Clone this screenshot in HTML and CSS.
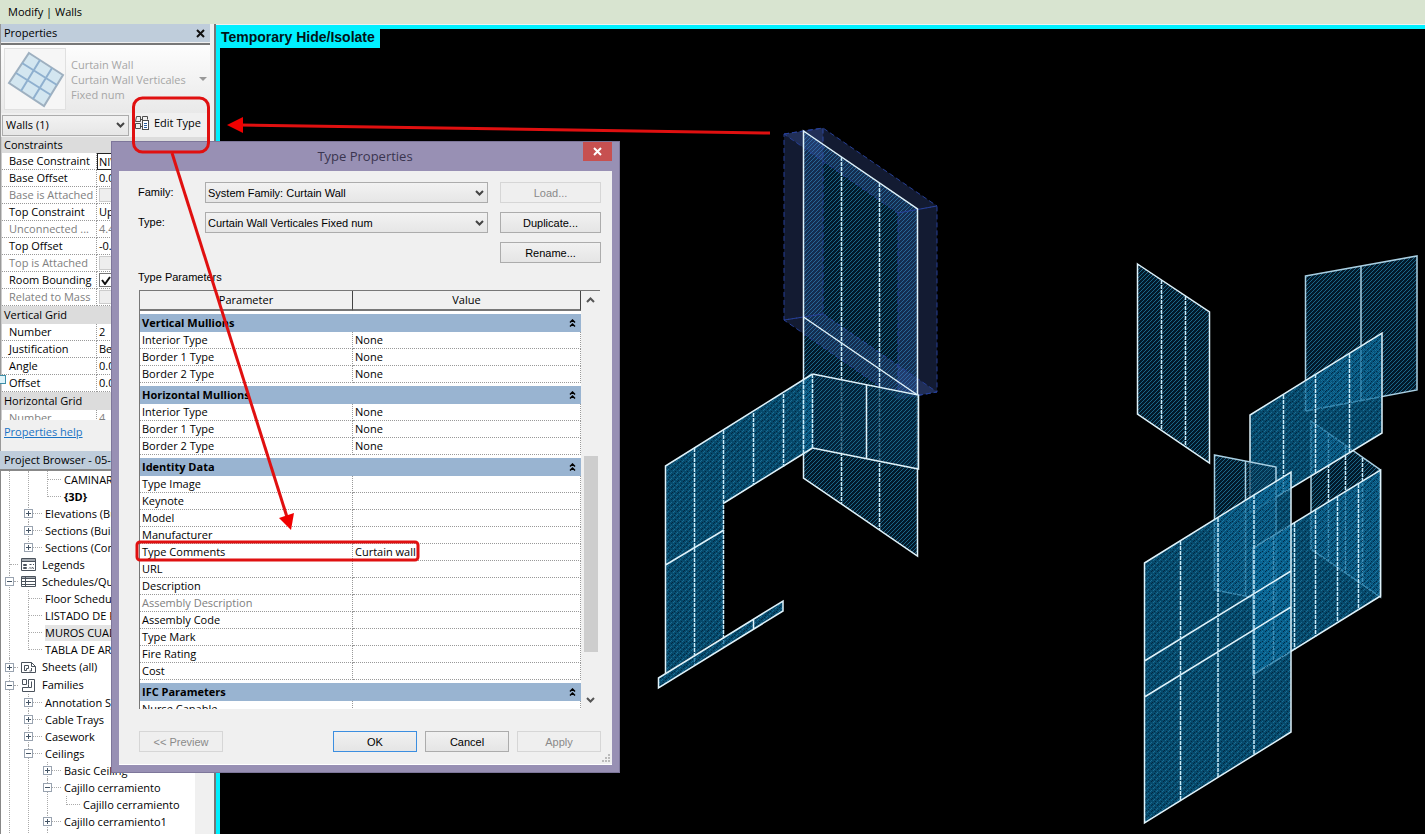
FILE: index.html
```html
<!DOCTYPE html>
<html lang="en">

<head>
  <meta charset="UTF-8">
  <meta name="viewport" content="width=device-width, initial-scale=1.0">
  <title>Type Properties</title>
  <link rel="stylesheet" href="styles.css">
</head>

<body>
  <header class="context-bar">Modify | Walls</header>

  <div class="workspace">
    <aside class="sidebar">
      <section class="properties">
        <div class="panel-title">
          <h2>Properties</h2>
          <button type="button" class="panel-close" aria-label="Close properties">
            <svg width="9" height="9" viewBox="0 0 9 9"><path d="M1 1l7 7M8 1l-7 7" /></svg>
          </button>
        </div>

        <button type="button" class="type-selector" disabled>
          <span class="thumb">
            <svg width="60" height="60" viewBox="0 0 60 60">
              <path class="glass" d="M24 4L58 26L39 57L4 34Z" />
              <path class="bars" d="M35 11L16 42M47 19L28 50M17 14L52 36M11 24L46 46" />
            </svg>
          </span>
          <span class="type-name">Curtain Wall<br>Curtain Wall Verticales<br>Fixed num</span>
          <span class="caret"></span>
        </button>

        <div class="filter-row">
          <select class="combo" aria-label="Category">
            <option>Walls (1)</option>
          </select>
          <button type="button" class="edit-type">
            <svg width="16" height="16" viewBox="0 0 16 16">
              <path d="M2.500 1.500h4v5h-5zM8.500 1.500h5v3M8.500 1.500v5M1.500 8.500h5v5h-5zM6.500 4.500h2M6.500 11.500h2" />
              <rect x="8.500" y="5.500" width="6" height="9" />
              <path class="lines" d="M10 8.500h3M10 10.500h3M10 12.500h3" />
            </svg>
            Edit Type
          </button>
        </div>

        <div class="prop-scroll">
          <table class="prop-table">
            <colgroup>
              <col class="name-col">
              <col>
            </colgroup>
            <tbody>
              <tr class="group"><th colspan="2">Constraints</th></tr>
              <tr><td>Base Constraint</td><td class="active">NIVEL 1</td></tr>
              <tr><td>Base Offset</td><td>0.0000</td></tr>
              <tr class="off"><td>Base is Attached</td><td><input type="checkbox" aria-label="Base is Attached" disabled></td></tr>
              <tr><td>Top Constraint</td><td>Up to level</td></tr>
              <tr class="off"><td>Unconnected ...</td><td>4.4000</td></tr>
              <tr><td>Top Offset</td><td>-0.1000</td></tr>
              <tr class="off"><td>Top is Attached</td><td><input type="checkbox" aria-label="Top is Attached" disabled></td></tr>
              <tr><td>Room Bounding</td><td><input type="checkbox" aria-label="Room Bounding" checked></td></tr>
              <tr class="off"><td>Related to Mass</td><td><input type="checkbox" aria-label="Related to Mass" disabled></td></tr>
              <tr class="group"><th colspan="2">Vertical Grid</th></tr>
              <tr><td>Number</td><td>2</td></tr>
              <tr><td>Justification</td><td>Beginning</td></tr>
              <tr><td>Angle</td><td>0.000°</td></tr>
              <tr><td>Offset</td><td>0.0000</td></tr>
              <tr class="group"><th colspan="2">Horizontal Grid</th></tr>
              <tr class="off"><td>Number</td><td>4</td></tr>
            </tbody>
          </table>
        </div>
        <div class="help-row"><a href="#help">Properties help</a></div>
      </section>

      <section class="browser">
        <div class="panel-title">
          <h2>Project Browser - 05-C</h2>
        </div>
        <div class="tree-box">
          <ul class="tree">
            <li>
              <ul>
                <li>
                  <ul>
                    <li><div class="node leaf"><i></i><span>CAMINAR</span></div></li>
                    <li class="last"><div class="node leaf"><i></i><b>{3D}</b></div></li>
                  </ul>
                </li>
                <li><div class="node"><button type="button" class="toggle plus" aria-label="Expand"></button><i></i><span>Elevations (Building)</span></div></li>
                <li><div class="node"><button type="button" class="toggle plus" aria-label="Expand"></button><i></i><span>Sections (Building)</span></div></li>
                <li class="last"><div class="node"><button type="button" class="toggle plus" aria-label="Expand"></button><i></i><span>Sections (Construction)</span></div></li>
              </ul>
            </li>
            <li>
              <div class="node leaf top"><i></i>
                <svg width="15" height="15" viewBox="0 0 15 15"><path class="fill" d="M1 2h13v3h-13z" /><path d="M.500 1.500h14v12h-14zM.500 4.500h14M2.500 7.500h3v1h-3zM2.500 10.500h3v1h-3zM8.500 7.500h2M12 7.500h1M8 11.500l1-1 1 1 1-1 2 1" /></svg>
                <span>Legends</span>
              </div>
            </li>
            <li>
              <div class="node top"><button type="button" class="toggle" aria-label="Collapse"></button><i></i>
                <svg width="15" height="15" viewBox="0 0 15 15"><path class="fill" d="M1 2h13v2h-13z" /><path d="M.500 2.500h14v10h-14zM.500 4.500h14M.500 7.500h14M.500 10.500h14M4.500 3v10" /></svg>
                <span>Schedules/Quantities</span>
              </div>
              <ul>
                <li><div class="node leaf"><i></i><span>Floor Schedule</span></div></li>
                <li><div class="node leaf"><i></i><span>LISTADO DE PLANOS</span></div></li>
                <li><div class="node leaf selected"><i></i><span>MUROS CUADRO</span></div></li>
                <li class="last"><div class="node leaf"><i></i><span>TABLA DE AREAS</span></div></li>
              </ul>
            </li>
            <li>
              <div class="node top tall"><button type="button" class="toggle plus" aria-label="Expand"></button><i></i>
                <svg width="15" height="15" viewBox="0 0 15 15"><path d="M.500 2.500h10l4 4v6h-14zM10.500 2.500v4h4M3.500 10.500v-5h4v3h-2v2zM10.500 8v3h-2" /></svg>
                <span>Sheets (all)</span>
              </div>
            </li>
            <li>
              <div class="node top tall"><button type="button" class="toggle" aria-label="Collapse"></button><i></i>
                <svg width="15" height="15" viewBox="0 0 15 15"><path d="M1.500 1.500h4v5h-4zM7.500 1.500h6v12h-12v-4h6v-3zM7.500 9.500h3v-6" /></svg>
                <span>Families</span>
              </div>
              <ul>
                <li><div class="node"><button type="button" class="toggle plus" aria-label="Expand"></button><i></i><span>Annotation Symbols</span></div></li>
                <li><div class="node"><button type="button" class="toggle plus" aria-label="Expand"></button><i></i><span>Cable Trays</span></div></li>
                <li><div class="node"><button type="button" class="toggle plus" aria-label="Expand"></button><i></i><span>Casework</span></div></li>
                <li>
                  <div class="node"><button type="button" class="toggle" aria-label="Collapse"></button><i></i><span>Ceilings</span></div>
                  <ul>
                    <li><div class="node"><button type="button" class="toggle plus" aria-label="Expand"></button><i></i><span>Basic Ceiling</span></div></li>
                    <li>
                      <div class="node"><button type="button" class="toggle" aria-label="Collapse"></button><i></i><span>Cajillo cerramiento</span></div>
                      <ul>
                        <li class="last"><div class="node leaf"><i></i><span>Cajillo cerramiento</span></div></li>
                      </ul>
                    </li>
                    <li><div class="node"><button type="button" class="toggle plus" aria-label="Expand"></button><i></i><span>Cajillo cerramiento1</span></div></li>
                    <li><div class="node"></div></li>
                  </ul>
                </li>
              </ul>
            </li>
          </ul>
          <div class="tree-scroll"></div>
        </div>
      </section>
    </aside>

    <main class="view">
      <div class="view-label">Temporary Hide/Isolate</div>
      <svg class="scene" viewBox="220 29 1205 805" preserveAspectRatio="xMinYMin meet">
        <defs>
          <pattern id="hatch" width="4" height="4" patternUnits="userSpaceOnUse">
            <rect width="4" height="4" fill="#032c48" fill-opacity=".6" />
            <path d="M-1 1L1 -1M0 4L4 0M3 5L5 3" stroke="#1b6688" stroke-width="1" />
          </pattern>
          <pattern id="dense" width="6" height="6" patternUnits="userSpaceOnUse">
            <rect width="6" height="6" fill="#08699a" fill-opacity=".7" />
            <path d="M0 0h1v1h-1zM3 3h1v1h-1zM5 1h1v1h-1zM2 5h1v1h-1z" fill="#001a30" fill-opacity=".7" />
            <path d="M1 2h1v1h-1zM2 1h1v1h-1zM4 5h1v1h-1zM5 4h1v1h-1z" fill="#3090ba" fill-opacity=".5" />
          </pattern>
        </defs>

        <!-- tall panel and its selection volume -->
        <path fill="url(#hatch)" d="M803.500 131L917.500 209V556L803.500 478Z" />
        <g class="volume">
          <path d="M784 134L823 128V314L784 320Z" />
          <path d="M898 213L937 206V392L898 399Z" />
          <path d="M784 134L823 128L937 206L898 213Z" />
          <path d="M784 320L823 314L937 392L898 399Z" />
        </g>
        <path class="edge" d="M803.500 131L917.500 209V556L803.500 478Z" />
        <path class="edge" d="M803.500 317L917.500 395" />
        <path class="mullion" d="M841.500 157V504M879.500 183V530" />

        <!-- corner wall -->
        <path fill="url(#hatch)" d="M812.500 374L918.500 395V469L812.500 448Z" />
        <path fill="url(#dense)" d="M665.500 466L812.500 374V448L724 503V636L665.500 673Z" />
        <path class="edge" d="M812.500 374L918.500 395V469L812.500 448M866.500 385V459" />
        <path class="edge" d="M665.500 673V466L812.500 374M812.500 448L724 503M665.500 565L724 530" />
        <path class="mullion" d="M694.500 448V665M723.500 430V647M753.500 413V485M783.500 394V467M812.500 374V448M803.500 380V455" />

        <!-- low strip -->
        <path fill="url(#dense)" d="M658.500 678L783 601V611L658.500 688Z" />
        <path class="edge" d="M658.500 678L783 601V611L658.500 688ZM753.500 619V629" />

        <!-- right group -->
        <path fill="url(#hatch)" d="M1137.500 264L1209.500 312V463L1137.500 414Z" />
        <path class="edge" d="M1137.500 264L1209.500 312V463L1137.500 414Z" />
        <path class="mullion" d="M1161.500 280V430M1185.500 296V447" />

        <path fill="url(#hatch)" d="M1305.500 276L1417 256V390L1305.500 411Z" />
        <path class="edge soft" d="M1305.500 276L1417 256V390L1305.500 411ZM1361 266V400" />

        <path fill="url(#hatch)" d="M1311 421L1380.500 470V597L1311 549Z" />
        <path class="edge soft" d="M1311 421L1380.500 470V597L1311 549Z" />
        <path class="mullion" d="M1328.500 434V561M1345.500 446V573M1362.500 458V584" />

        <path fill="url(#dense)" d="M1250 415L1382 333V433L1250 513Z" />
        <path class="edge" d="M1250 513V415L1382 333V433L1250 513" />
        <path class="mullion" d="M1283.500 395V492M1315.500 374V473M1349.500 354V452" />

        <path fill="url(#hatch)" d="M1214.500 455L1276 467V602L1214.500 590Z" />
        <path class="edge soft" d="M1214.500 455L1276 467V602L1214.500 590ZM1245.500 461V596" />

        <path fill="url(#dense)" d="M1253 548L1380.500 470V596L1253 675Z" />
        <path class="edge" d="M1253 548L1380.500 470V596L1253 675Z" />
        <path class="mullion" d="M1273.500 536V662M1294.500 523V650M1315.500 510V637M1337.500 497V623M1358.500 484V610" />

        <path fill="url(#dense)" d="M1144.500 563L1291 472V732L1144.500 823Z" />
        <path class="edge" d="M1144.500 563L1291 472V732L1144.500 823ZM1144.500 661L1291 571M1144.500 697L1291 607" />
        <path class="mullion" d="M1180.500 541V800M1218 518V777M1254 495V755" />
      </svg>
    </main>
  </div>

  <div class="dialog" role="dialog" aria-labelledby="dialog-title">
    <div class="dialog-title">
      <h1 id="dialog-title">Type Properties</h1>
      <button type="button" class="dialog-close" aria-label="Close">
        <svg width="9" height="9" viewBox="0 0 9 9"><path d="M1 1l7 7M8 1l-7 7" /></svg>
      </button>
    </div>

    <form class="dialog-body">
      <div class="type-grid">
        <label for="family">Family:</label>
        <select id="family" class="combo">
          <option>System Family: Curtain Wall</option>
        </select>
        <button type="button" class="btn" disabled>Load...</button>

        <label for="type">Type:</label>
        <select id="type" class="combo">
          <option>Curtain Wall Verticales Fixed num</option>
        </select>
        <button type="button" class="btn">Duplicate...</button>
        <button type="button" class="btn rename">Rename...</button>
      </div>

      <div class="caption">Type Parameters</div>

      <div class="param-box">
        <div class="param-clip">
          <table class="param-table">
            <thead>
              <tr><th>Parameter</th><th>Value</th></tr>
            </thead>
            <tbody>
              <tr class="group"><th colspan="2"><div>Vertical Mullions<button type="button" aria-label="Collapse"><svg width="7" height="8" viewBox="0 0 7 8"><path d="M1 3.500l2.500-2.500 2.500 2.500M1 7.500l2.500-2.500 2.500 2.500" /></svg></button></div></th></tr>
              <tr><td>Interior Type</td><td>None</td></tr>
              <tr><td>Border 1 Type</td><td>None</td></tr>
              <tr><td>Border 2 Type</td><td>None</td></tr>
              <tr class="group"><th colspan="2"><div>Horizontal Mullions<button type="button" aria-label="Collapse"><svg width="7" height="8" viewBox="0 0 7 8"><path d="M1 3.500l2.500-2.500 2.500 2.500M1 7.500l2.500-2.500 2.500 2.500" /></svg></button></div></th></tr>
              <tr><td>Interior Type</td><td>None</td></tr>
              <tr><td>Border 1 Type</td><td>None</td></tr>
              <tr><td>Border 2 Type</td><td>None</td></tr>
              <tr class="group"><th colspan="2"><div>Identity Data<button type="button" aria-label="Collapse"><svg width="7" height="8" viewBox="0 0 7 8"><path d="M1 3.500l2.500-2.500 2.500 2.500M1 7.500l2.500-2.500 2.500 2.500" /></svg></button></div></th></tr>
              <tr><td>Type Image</td><td></td></tr>
              <tr><td>Keynote</td><td></td></tr>
              <tr><td>Model</td><td></td></tr>
              <tr><td>Manufacturer</td><td></td></tr>
              <tr><td>Type Comments</td><td>Curtain wall</td></tr>
              <tr><td>URL</td><td></td></tr>
              <tr><td>Description</td><td></td></tr>
              <tr class="off"><td>Assembly Description</td><td></td></tr>
              <tr><td>Assembly Code</td><td></td></tr>
              <tr><td>Type Mark</td><td></td></tr>
              <tr><td>Fire Rating</td><td></td></tr>
              <tr><td>Cost</td><td></td></tr>
              <tr class="group"><th colspan="2"><div>IFC Parameters<button type="button" aria-label="Collapse"><svg width="7" height="8" viewBox="0 0 7 8"><path d="M1 3.500l2.500-2.500 2.500 2.500M1 7.500l2.500-2.500 2.500 2.500" /></svg></button></div></th></tr>
              <tr><td>Nurse Capable</td><td></td></tr>
            </tbody>
          </table>
        </div>
        <div class="scrollbar">
          <svg width="9" height="6" viewBox="0 0 9 6"><path d="M1 5l3.500-3.500L8 5" /></svg>
          <div class="track"><div class="handle"></div></div>
          <svg width="9" height="6" viewBox="0 0 9 6"><path d="M1 1l3.500 3.500L8 1" /></svg>
        </div>
      </div>

      <div class="actions">
        <button type="button" class="btn preview" disabled>&lt;&lt; Preview</button>
        <button type="submit" class="btn primary">OK</button>
        <button type="button" class="btn">Cancel</button>
        <button type="button" class="btn" disabled>Apply</button>
      </div>
      <svg class="grip" width="8" height="8" viewBox="0 0 8 8"><path d="M6 0h2v2h-2zM3 3h2v2h-2zM6 3h2v2h-2zM0 6h2v2h-2zM3 6h2v2h-2zM6 6h2v2h-2z" /></svg>
    </form>
  </div>

  <!-- red callouts over the windows -->
  <svg class="callouts" width="780" height="580" viewBox="0 0 780 580">
    <rect x="133.500" y="98" width="75" height="54" rx="9" />
    <path d="M770 133L240 125" />
    <path class="head" d="M227 125L243 117V133Z" />
    <path d="M172 153L287 517" />
    <path class="head" d="M291 530L279 518L294 513Z" />
    <rect x="137" y="542" width="281" height="18" rx="3" />
  </svg>
</body>

</html>
```
FILE: styles.css
```css
* {
  box-sizing: border-box;
}

body {
  margin: 0;
  height: 100vh;
  display: flex;
  flex-direction: column;
  overflow: hidden;
  font-family: "Open Sans", "Noto Sans", sans-serif;
  font-size: 11px;
  line-height: 16px;
  color: #000;
  background-color: #f0f0f0;
}

h1,
h2 {
  margin: 0;
  font-weight: normal;
}

button,
select,
input {
  font: inherit;
  color: inherit;
  margin: 0;
  padding: 0;
}

button {
  border: none;
  background: none;
}

svg {
  display: block;
  flex: none;
}

.context-bar {
  flex: none;
  height: 24px;
  padding: 0 8px;
  line-height: 24px;
  background-color: #d8e4d0;
}

.workspace {
  flex: 1;
  min-height: 0;
  display: flex;
}

/* left side */
.sidebar {
  width: 216px;
  flex: none;
  display: flex;
  flex-direction: column;
  padding-right: 6px;
  background: linear-gradient(90deg, #f0f0f0 214px, #777 214px);
}

.panel-title {
  display: flex;
  align-items: center;
  justify-content: space-between;
  height: 18px;
  padding: 0 5px 0 4px;
  background-color: #bfcddb;
}

.panel-title h2 {
  font-size: 11px;
  white-space: nowrap;
}

.properties .panel-title {
  padding-left: 3px;
}

.panel-close svg,
.dialog-close svg {
  fill: none;
  stroke: #111;
  stroke-width: 2;
}

.properties {
  position: relative;
  flex: none;
  border-left: 1px solid #999;
}

/* dock handle on the panel edge */
.properties::after {
  content: "";
  position: absolute;
  left: -3px;
  bottom: 67px;
  width: 6px;
  height: 7px;
  border: 1px solid #3d8fa8;
  background-color: #dff4fa;
}

.type-selector {
  display: flex;
  align-items: center;
  width: 100%;
  height: 70px;
  margin-top: 1px;
  padding: 2px 3px;
  border-top: 2px solid #777;
  background: linear-gradient(#fdfdfd, #e9e9e9);
  color: #a6a6a6;
  text-align: left;
}

.thumb {
  border: 1px solid #e0e0e0;
  background-color: #f6f6f6;
}

.thumb .glass {
  fill: #d3e6f0;
  stroke: #9eb0c0;
  stroke-width: 2;
}

.thumb .bars {
  fill: none;
  stroke: #8fb0cf;
  stroke-width: 2;
}

.type-name {
  flex: 1;
  margin-left: 5px;
  line-height: 15px;
  white-space: nowrap;
}

.caret {
  border: 4px solid transparent;
  border-top-color: #999;
  border-bottom: none;
}

.combo {
  appearance: none;
  height: 21px;
  padding: 0 20px 0 2px;
  border: 1px solid #acacac;
  border-radius: 0;
  background: url("data:image/svg+xml,%3Csvg xmlns='http://www.w3.org/2000/svg' width='9' height='6'%3E%3Cpath d='M1 1l3.500 3.500L8 1' fill='none' stroke='%23444' stroke-width='2'/%3E%3C/svg%3E") right 3px center no-repeat, linear-gradient(#f2f2f2, #e6e6e6);
}

.filter-row {
  display: flex;
  align-items: center;
  height: 24px;
  gap: 5px;
  padding-left: 1px;
}

.filter-row .combo {
  width: 127px;
  padding-left: 3px;
}

.edit-type {
  display: flex;
  align-items: center;
  gap: 4px;
  height: 20px;
  align-self: flex-start;
  white-space: nowrap;
}

.edit-type svg {
  fill: none;
  stroke: #4d4d4d;
}

.edit-type rect {
  fill: #fff;
}

.edit-type .lines {
  stroke: #2c5f9e;
}

.prop-scroll {
  height: 283px;
  overflow: hidden;
  border-left: 1px solid #ccc;
}

.prop-table,
.param-table {
  width: 100%;
  table-layout: fixed;
  border-collapse: separate;
  border-spacing: 0;
  background-color: #fff;
}

.name-col {
  width: 95px;
}

.prop-table th {
  height: 16px;
  padding: 0 2px;
  background-color: #dcdcdc;
  font-weight: normal;
  text-align: left;
}

.prop-table td {
  height: 17px;
  padding: 0 0 0 7px;
  border-bottom: 1px dotted #999;
  white-space: nowrap;
  overflow: hidden;
}

.prop-table td:first-child {
  border-right: 1px dotted #999;
}

.prop-table td + td {
  padding-left: 2px;
}

.prop-table tr.group ~ tr.group th {
  height: 18px;
}

.prop-table td.active {
  padding-left: 1px;
  border: 1px solid #222;
  line-height: 15px;
}

.prop-table input {
  appearance: none;
  display: block;
  width: 14px;
  height: 14px;
  border: 1px solid #777;
  background-color: #fff;
}

.prop-table input:disabled {
  border-color: #ccc;
  background-color: #eee;
}

.prop-table input:checked {
  background: url("data:image/svg+xml,%3Csvg xmlns='http://www.w3.org/2000/svg' width='10' height='9'%3E%3Cpath d='M1 4l3 4L9 1' fill='none' stroke='%23111' stroke-width='2'/%3E%3C/svg%3E") center no-repeat #fff;
}

.off {
  color: #808080;
}

.help-row {
  height: 31px;
  padding: 4px 3px;
}

.help-row a {
  color: #1a73c4;
}

.browser {
  flex: 1;
  min-height: 0;
  display: flex;
  flex-direction: column;
}

.browser .panel-title {
  flex: none;
}

.tree-box {
  flex: 1;
  min-height: 0;
  display: flex;
  border: 1px solid #888;
  border-width: 2px 0 0 1px;
  overflow: hidden;
  background-color: #fff;
}

.tree-scroll {
  width: 15px;
  background-color: #f0f0f0;
}

.tree {
  flex: 1;
  min-width: 0;
  overflow: hidden;
}

.tree,
.tree ul {
  list-style: none;
  margin: 0;
  padding: 0 0 0 8px;
}

.tree ul {
  padding-left: 18px;
}

.tree li {
  border-left: 1px dotted #aaa;
}

/* the guide line stops half way down the last row */
.tree li.last {
  border-left-color: transparent;
  background: repeating-linear-gradient(#aaa 0 1px, transparent 1px 2px) 0 0 / 1px 9px no-repeat border-box;
}

.node {
  display: flex;
  align-items: center;
  height: 17px;
  margin-left: -5px;
  white-space: nowrap;
}

.node.leaf {
  margin-left: 0;
}

.node.tall {
  height: 18px;
}

.node i {
  width: 9px;
  margin-right: 3px;
  border-top: 1px dotted #aaa;
}

.node.leaf i {
  width: 13px;
}

.node.top i {
  width: 4px;
}

.node.top.leaf i {
  width: 8px;
}

.node svg {
  margin-right: 6px;
  fill: none;
  stroke: #4a525c;
}

.node .fill {
  fill: #a3a9b0;
  stroke: none;
}

.node.selected span {
  flex: 1;
  background-color: #e4e4e4;
}

.toggle {
  flex: none;
  width: 9px;
  height: 9px;
  border: 1px solid #99a3b0;
  background: linear-gradient(#456, #456) center / 5px 1px no-repeat #fff;
}

.toggle.plus {
  background: linear-gradient(#456, #456) center / 5px 1px no-repeat, linear-gradient(#456, #456) center / 1px 5px no-repeat #fff;
}

/* 3D view */
.view {
  flex: 1;
  min-width: 0;
  margin-top: 1px;
  border: solid #00f0ff;
  border-width: 4px 0 0 4px;
  background-color: #000;
  position: relative;
}

.view-label {
  position: absolute;
  top: -4px;
  left: -4px;
  height: 23px;
  padding: 0 5px;
  background-color: #00f0ff;
  color: #001418;
  font: bold 14px/25px "Liberation Sans", Arial, sans-serif;
}

.scene {
  width: 100%;
  height: 100%;
}

.edge,
.mullion {
  fill: none;
  stroke: #dff2fa;
  stroke-width: 1.5;
}

.soft {
  stroke: #a9cfe2;
}

.mullion {
  stroke: #c9ecfa;
  stroke-dasharray: 4 1;
}

.volume path {
  fill: #4a68c0;
  fill-opacity: .26;
  stroke: #263f96;
  stroke-dasharray: 5 3;
}

/* dialog window */
.dialog {
  position: absolute;
  top: 141px;
  left: 111px;
  width: 509px;
  padding: 0 7px 7px;
  border: 1px solid #7d769a;
  background-color: #9890b4;
}

.dialog-title {
  display: flex;
  align-items: flex-start;
  height: 29px;
}

.dialog-title h1 {
  flex: 1;
  padding-left: 28px;
  font-size: 13px;
  line-height: 29px;
  text-align: center;
  color: #3a3550;
}

.dialog-close {
  display: flex;
  align-items: center;
  justify-content: center;
  width: 29px;
  height: 19px;
  background-color: #c75050;
}

.dialog-close svg {
  stroke: #fff;
}

.dialog-body {
  position: relative;
  padding: 11px 11px 12px 19px;
  border-bottom: 1px solid #fff;
  background-color: #f0f0f0;
}

.type-grid {
  display: grid;
  grid-template-columns: 67px 1fr 101px;
  grid-auto-rows: 21px;
  row-gap: 9px;
}

.type-grid label {
  line-height: 20px;
}

.type-grid .combo {
  margin-right: 12px;
}

.type-grid,
.caption,
.actions {
  font-family: "Liberation Sans", Arial, sans-serif;
}

.rename {
  grid-column: 3;
}

.btn {
  height: 21px;
  border: 1px solid #acacac;
  background: linear-gradient(#f1f1f1, #e5e5e5);
}

.btn:disabled {
  border-color: #d6d6d6;
  background: #efefef;
  color: #8a8a8a;
}

.btn.primary {
  border-color: #3c8ee0;
}

.caption {
  margin: 6px 0 5px;
}

.param-box {
  display: flex;
  height: 419px;
  margin: 0 1px;
  border-top: 1px solid #777;
  border-left: 1px solid #777;
}

.param-clip {
  flex: 1;
  overflow: hidden;
}

.param-table thead th {
  height: 20px;
  border-right: 1px solid #444;
  border-bottom: 2px solid #777;
  background-color: #f0f0f0;
  font-weight: normal;
}

.param-table thead th:first-child {
  width: 213px;
}

.param-table th {
  padding: 0;
}

.param-table .group th {
  padding-top: 3px;
}

.param-table .group div {
  display: flex;
  align-items: center;
  justify-content: space-between;
  height: 18px;
  padding: 0 5px 0 2px;
  background-color: #99b4d1;
}

.param-table .group svg {
  fill: none;
  stroke: #000;
  stroke-width: 1.5;
}

.param-table td {
  height: 17px;
  padding: 0 2px;
  border-right: 1px dotted #999;
  border-bottom: 1px dotted #999;
}

.scrollbar {
  display: flex;
  flex-direction: column;
  align-items: center;
  width: 19px;
  padding: 6px 0;
}

.scrollbar svg {
  fill: none;
  stroke: #555;
  stroke-width: 2;
}

.track {
  flex: 1;
  display: flex;
  flex-direction: column;
  justify-content: flex-end;
  padding-bottom: 45px;
}

.handle {
  width: 14px;
  height: 196px;
  background-color: #cdcdcd;
}

.actions {
  display: flex;
  gap: 8px;
  margin: 22px 0 0 1px;
}

.actions .btn {
  width: 84px;
}

.actions .preview {
  margin-right: auto;
}

.grip {
  position: absolute;
  right: 2px;
  bottom: 2px;
  fill: #bbb;
}

.callouts {
  position: absolute;
  top: 0;
  left: 0;
  fill: none;
  stroke: #e01010;
  stroke-width: 3;
  pointer-events: none;
}

.callouts .head {
  fill: #f00000;
  stroke: none;
}
```
